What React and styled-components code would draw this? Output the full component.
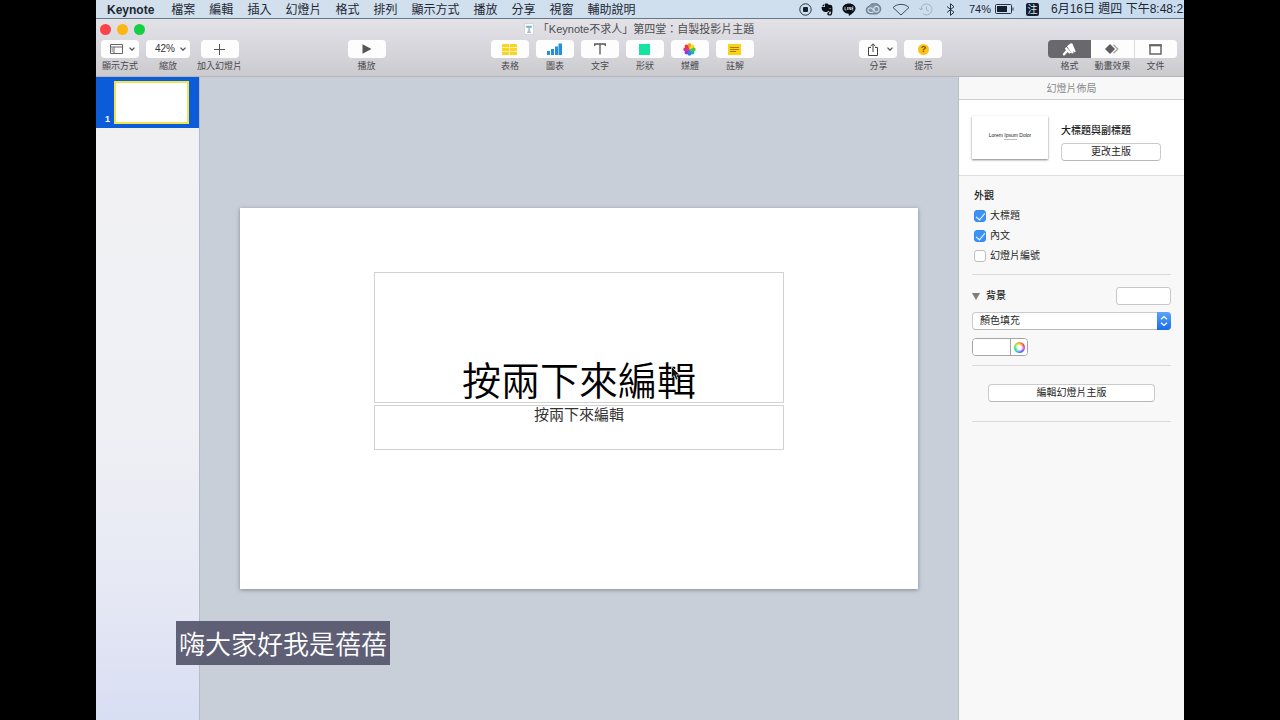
import React from "react";
import styled, { createGlobalStyle } from "styled-components";

const Global = createGlobalStyle`
  * { box-sizing: border-box; }
  body {
    margin: 0;
    background: #000;
    color: #262626;
    font-family: "Liberation Sans", "Noto Sans CJK TC", sans-serif;
    font-size: 10px;
    line-height: 14px;
  }
  button, select, input { font: inherit; color: inherit; margin: 0; padding: 0; }
  svg { display: block; flex: none; }
`;

const Screen = styled.div`
  position: relative;
  width: 85%;
  min-height: 100vh;
  margin: 0 auto;
  display: flex;
  flex-direction: column;
  overflow: hidden;
`;

/* System menu bar */
const MenuBar = styled.header`
  display: flex;
  justify-content: space-between;
  height: 19px;
  padding-left: 11px;
  background: linear-gradient(90deg, #d3e0ec, #cfdfee 60%, #c8dcee);
  border-bottom: 1px solid #64788c;
  color: #1c2733;
  font-size: 12px;
  line-height: 20px;
  white-space: nowrap;
`;
const Menus = styled.nav`
  display: flex;
  gap: 14px;
`;
const Menu = styled.button`
  border: 0;
  background: none;
  line-height: 20px;
  font-weight: ${(p) => (p.$app ? 700 : 400)};
  margin-right: ${(p) => (p.$app ? 3 : 0)}px;
`;
const Status = styled.div`
  display: flex;
  align-items: center;
  gap: 9px;
`;
const Slot = styled.span`
  width: ${(p) => p.$w}px;
  display: flex;
  justify-content: center;
`;
const Battery = styled.span`
  display: flex;
  align-items: center;
  gap: 4px;
  font-size: 11px;
`;
const InputMethod = styled.span`
  width: 13px;
  height: 13px;
  border-radius: 2px;
  background: #14202f;
  color: #dbe8f4;
  font-size: 10px;
  line-height: 13px;
  text-align: center;
`;
const Clock = styled.time`
  width: 133px;
`;

/* Window header */
const WindowHead = styled.div`
  height: 58px;
  background: linear-gradient(#e3e2e7, #dad9df 40%, #cbcbcf);
  border-bottom: 1px solid #b4b4ba;
`;
const TitleRow = styled.div`
  display: grid;
  grid-template-columns: 1fr auto 1fr;
  align-items: center;
  height: 20px;
  padding: 0 6px 0 4px;
`;
const Lights = styled.div`
  display: flex;
  gap: 6px;
`;
const Light = styled.button`
  width: 11px;
  height: 11px;
  border: 0;
  border-radius: 50%;
  background: ${(p) => p.$color};
`;
const Title = styled.h1`
  display: flex;
  align-items: center;
  gap: 4px;
  margin: 0;
  font-size: 11px;
  font-weight: 400;
  color: #4d4d50;
  white-space: nowrap;
`;
const Toolbar = styled.div`
  display: flex;
  justify-content: space-between;
  padding: 1px 7px 0 5px;
`;
const Group = styled.div`
  display: flex;
  gap: ${(p) => p.$gap ?? 7}px;
`;
const Tool = styled.button`
  display: flex;
  flex-direction: column;
  align-items: center;
  gap: 1px;
  border: 0;
  background: none;
  color: #4a4a4c;
  font-size: 9px;
  line-height: 14px;
  white-space: nowrap;
`;
const Face = styled.span`
  display: flex;
  align-items: center;
  justify-content: ${(p) => (p.$menu ? "space-between" : "center")};
  width: ${(p) => p.$w || 38}px;
  height: 18px;
  padding: ${(p) => (p.$menu ? "0 4px 0 9px" : "0")};
  border-radius: 4px;
  background: #fdfdfd;
  color: #333;
  font-size: 10px;
`;
const SegFace = styled(Face)`
  width: 43px;
  border-radius: 0;
  background: ${(p) => (p.$on ? "#69696d" : "#fdfdfd")};
  border-left: ${(p) => (p.$line ? "1px solid #dcdce0" : "0")};
  ${Tool}:first-child & { border-radius: 4px 0 0 4px; }
  ${Tool}:last-child & { border-radius: 0 4px 4px 0; }
`;

/* Work area */
const Body = styled.main`
  flex: 1;
  display: flex;
`;
const Navigator = styled.aside`
  width: 104px;
  border-right: 1px solid #b3bcc8;
  background: linear-gradient(#f1f1f3, #eff0f4 55%, #e6e8f4 80%, #d8def3);
`;
const SlideItem = styled.div`
  display: flex;
  align-items: flex-end;
  justify-content: flex-end;
  gap: 4px;
  height: 51px;
  padding: 0 10px 4px 0;
  background: #0b5cd9;
  color: #fff;
  font-size: 9px;
  line-height: 9px;
  font-weight: 700;
`;
const Thumb = styled.div`
  width: 75px;
  height: 43px;
  border: 2px solid #f4e34a;
  background: #fff;
`;
const Canvas = styled.section`
  flex: 1;
  display: flex;
  align-items: center;
  padding: 0 40px;
  background: #c8cfd8;
`;
const Slide = styled.article`
  position: relative;
  width: 100%;
  aspect-ratio: 16 / 9;
  display: flex;
  flex-direction: column;
  align-items: center;
  gap: 2px;
  padding-top: 64px;
  background: #fff;
  color: #000;
  box-shadow: 0 1px 4px rgba(60, 70, 85, 0.5);
`;
const TextBox = styled.div`
  display: flex;
  justify-content: center;
  width: 410px;
  max-width: 90%;
  border: 1px solid #d2d2d2;
`;
const TitleBox = styled(TextBox)`
  align-items: flex-end;
  height: 131px;
  font-family: "Noto Sans CJK TC", sans-serif;
  font-size: 39px;
  line-height: 48px;
  font-weight: 350;
`;
const BodyBox = styled(TextBox)`
  height: 45px;
  font-size: 15px;
  line-height: 18px;
  font-weight: 400;
  color: #333;
`;
const Pointer = styled.svg`
  position: absolute;
  left: 431px;
  top: 158px;
`;

/* Inspector */
const Inspector = styled.aside`
  width: 226px;
  border-left: 1px solid #b9bfc8;
  background: #f8f8f8;
`;
const InspectorTitle = styled.h2`
  margin: 0;
  height: 23px;
  border-bottom: 1px solid #cfcfcf;
  font-size: 10px;
  line-height: 23px;
  font-weight: 400;
  text-align: center;
  color: #8a8a8a;
`;
const MasterPanel = styled.section`
  display: flex;
  gap: 13px;
  height: 76px;
  padding: 16px 13px 0;
  background: #fff;
  border-bottom: 1px solid #dedede;
`;
const MasterThumb = styled.div`
  width: 76px;
  height: 43px;
  padding-top: 15px;
  background: #fff;
  box-shadow: 0 1px 2px rgba(0, 0, 0, 0.5);
  text-align: center;
  font-size: 5px;
  line-height: 8px;
  color: #222;
`;
const TinyLine = styled.div`
  width: 13px;
  height: 1px;
  margin: 0 auto;
  background: #bbb;
`;
const MasterInfo = styled.div`
  display: flex;
  flex-direction: column;
  gap: 5px;
  padding-top: 8px;
`;
const Strong = styled.h3`
  margin: 0;
  font-size: 10px;
  line-height: 14px;
  font-weight: 500;
  color: #222;
`;
const PushButton = styled.button`
  display: block;
  width: ${(p) => p.$w}px;
  height: 18px;
  margin: 0 auto;
  border: 1px solid #cbcbcb;
  border-bottom-color: #b8b8b8;
  border-radius: 4px;
  background: #fff;
  line-height: 16px;
`;
const Section = styled.section`
  margin: 0 13px;
  padding: ${(p) => p.$pad};
  border-bottom: 1px solid #dcdcdc;
`;
const Checks = styled.div`
  display: flex;
  flex-direction: column;
  gap: 6px;
  padding-left: 2px;
`;
const Check = styled.label`
  display: flex;
  align-items: center;
  gap: 4px;
`;
const Box = styled.input`
  appearance: none;
  position: relative;
  width: 12px;
  height: 12px;
  border: 1px solid #bdbdbd;
  border-radius: 3px;
  background: #fff;
  &:checked {
    border-color: #3288f5;
    background: #3d92f8;
  }
  &:checked::after {
    content: "";
    position: absolute;
    left: 3px;
    top: 0;
    width: 4px;
    height: 8px;
    border: solid #fff;
    border-width: 0 1px 1px 0;
    transform: rotate(40deg);
  }
`;
const FillHead = styled.div`
  display: flex;
  align-items: center;
  gap: 6px;
  height: 18px;
`;
const Preview = styled.button`
  width: 55px;
  height: 18px;
  margin-left: auto;
  border: 1px solid #c8c8c8;
  border-radius: 3px;
  background: #fff;
`;
const SelectWrap = styled.label`
  position: relative;
  display: block;
  margin: 7px 0 8px;
`;
const Select = styled.select`
  display: block;
  appearance: none;
  width: 100%;
  height: 18px;
  padding: 0 20px 0 7px;
  border: 1px solid #cbcbcb;
  border-bottom-color: #b8b8b8;
  border-radius: 4px;
  background: #fff;
  line-height: 16px;
`;
const Stepper = styled.span`
  position: absolute;
  right: 0;
  top: 0;
  display: flex;
  align-items: center;
  justify-content: center;
  width: 14px;
  height: 18px;
  border-radius: 0 4px 4px 0;
  background: linear-gradient(#5ba5f7, #1a6bf0);
  pointer-events: none;
`;
const ColorWell = styled.div`
  display: flex;
  width: 56px;
  height: 18px;
  border: 1px solid #a5a5a5;
  border-radius: 4px;
  background: #fff;
  overflow: hidden;
`;
const Swatch = styled.button`
  flex: 1;
  border: 0;
  background: #fff;
`;
const WheelButton = styled.button`
  display: flex;
  align-items: center;
  justify-content: center;
  width: 17px;
  border: 0;
  border-left: 1px solid #a5a5a5;
  background: #fff;
`;
const Wheel = styled.span`
  width: 11px;
  height: 11px;
  border-radius: 50%;
  background: radial-gradient(#fff 25%, transparent 60%),
    conic-gradient(#f0a020, #f04040, #e040e0, #5060f0, #30c0f0, #30e060, #b0e030, #f0a020);
`;

const Caption = styled.p`
  position: absolute;
  left: 80px;
  bottom: 55px;
  margin: 0;
  padding: 0 3px;
  height: 44px;
  background: rgba(88, 88, 112, 0.95);
  color: #fff;
  font-family: "Noto Sans CJK TC", sans-serif;
  font-size: 26px;
  line-height: 44px;
  font-weight: 350;
  white-space: nowrap;
`;

const Chevron = () => (
  <svg width="6" height="4" viewBox="0 0 6 4" fill="none" stroke="#555" strokeWidth="1.3">
    <path d="M.5.6 3 3.200 5.500.6" />
  </svg>
);

const RecordIcon = () => (
  <svg width="13" height="13" viewBox="0 0 13 13">
    <circle cx="6.5" cy="6.5" r="5.7" fill="none" stroke="#26323e" />
    <rect x="4" y="4" width="5" height="5" rx="1" fill="#17212c" />
  </svg>
);
const ElephantIcon = () => (
  <svg width="12" height="13" viewBox="0 0 12 13" fill="#0b1016">
    <path d="M3.300.8v2.500H.8z" />
    <path d="M4 .5h2.500l.8.900 2.900.500c1 .300 1.300 1.600 1.300 4.100 0 4-.4 6.500-2 6.500H8c-1.200 0-1.700-.7-1.700-1.700 0-1.200.8-1.800 2-1.800v1.300c-.8 0-.8 1 0 1h.9c.6 0 .7-1 .7-2.500-1.500.1-2.400-.3-2.700-1.300C7 8.500 6.300 9 5 9 2 9 .6 7.300.5 4H4z" />
    <path d="M8.300 5.700c.3-.9 1.400-.9 1.600.2z" fill="#cfdfee" />
  </svg>
);
const ChatIcon = () => (
  <svg width="14" height="13" viewBox="0 0 14 13">
    <path d="M7 .5c3.700 0 6.500 2.200 6.500 5 0 2.700-3.500 5.400-6.300 7.200-.6.300-.3-1.300-.6-1.900C3 10.400.5 8.200.5 5.500c0-2.800 2.800-5 6.500-5z" fill="#0b1016" />
    <path d="M3 4v3h1.400M5.600 4v3M7 7V4l1.700 3V4M11.500 4H10v3h1.500M10 5.500h1.300" fill="none" stroke="#cfdfee" strokeWidth=".8" />
  </svg>
);
const CloudIcon = () => (
  <svg width="17" height="12" viewBox="0 0 17 12">
    <path d="M4.800 11A4 4 0 0 1 4 3.200 5.300 5.300 0 0 1 9.500.7a5.200 5.200 0 1 1 2 10.300z" fill="#8497a8" stroke="#5d7080" strokeWidth=".8" />
    <path d="M8.500 8.800C7 10 3 9.800 3 7.200 3 4.600 6 4.300 7.500 6l2.200 2.200c1.500 1.400 4.300.7 4.300-2 0-2.500-2.700-3.700-4.500-2C8.500 5 8.300 6.600 9.800 6.800" fill="none" stroke="#cfdfee" strokeWidth="1.100" />
  </svg>
);
const WifiIcon = () => (
  <svg width="18" height="13" viewBox="0 0 18 13" fill="none" stroke="#3c4c5b">
    <path d="M1 4.500C5.500.3 12.500.3 17 4.500L9 12z" strokeLinejoin="round" />
  </svg>
);
const BackupIcon = () => (
  <svg width="14" height="13" viewBox="0 0 14 13" fill="none" stroke="#a3b3c3">
    <path d="M2 6.500a5.500 5.500 0 1 1 2 4.200M.4 5.300 2 7l1.800-1.700M7.500 3.500v3.300l2.300 1.400" />
  </svg>
);
const BluetoothIcon = () => (
  <svg width="9" height="13" viewBox="0 0 9 13" fill="none" stroke="#25323f">
    <path d="M1 3.500 8 9.300l-3.500 3V.7L8 3.700 1 9.500" />
  </svg>
);
const BatteryIcon = () => (
  <svg width="19" height="10" viewBox="0 0 19 10">
    <rect x=".5" y=".5" width="16" height="9" rx="1" fill="none" stroke="#26323e" />
    <rect x="2" y="2" width="10" height="6" fill="#14202f" />
    <path d="M18 3.500v3" stroke="#26323e" />
  </svg>
);
const DocIcon = () => (
  <svg width="10" height="12" viewBox="0 0 11 13">
    <rect x=".5" y=".5" width="10" height="12" fill="#fafcfd" stroke="#d0d5da" />
    <path d="M2 3h7l-.8 2.500H2.800z" fill="#7fb9cc" />
    <path d="M5.500 5.500v4M3.500 10h4" stroke="#6a8b99" />
  </svg>
);
const LayoutIcon = () => (
  <svg width="13" height="10" viewBox="0 0 13 10" fill="none" stroke="#666">
    <path d="M.5.500h12v9H.5zM.5 3h12M4 3v6.500" />
    <path d="M1.500 5H3M1.500 7H3" />
  </svg>
);
const PlusIcon = () => (
  <svg width="11" height="11" viewBox="0 0 11 11" stroke="#555">
    <path d="M5.500 0v11M0 5.500h11" />
  </svg>
);
const PlayIcon = () => (
  <svg width="10" height="10" viewBox="0 0 10 10"><path d="M.5.300 9.500 5 .5 9.700z" fill="#555" /></svg>
);
const TableIcon = () => (
  <svg width="15" height="11" viewBox="0 0 15 11">
    <rect width="15" height="11" rx="1" fill="#f9d423" />
    <path d="M0 3.500h15M0 7.500h15M7.500 0v11" stroke="#fff8c4" strokeWidth=".8" />
  </svg>
);
const ChartIcon = () => (
  <svg width="15" height="12" viewBox="0 0 15 12" fill="#268fdb">
    <path d="M0 8h3v4H0zM4 6h3v6H4zM8 3.500h3V12H8zM11.500 .500h3.500V12h-3.500z" />
  </svg>
);
const TextIcon = () => (
  <svg width="12" height="12" viewBox="0 0 12 12" fill="none" stroke="#555" strokeWidth="1.300">
    <path d="M.7 3V1h10.600v2M6 1v10.500" />
  </svg>
);
const ShapeIcon = () => (
  <svg width="11" height="11" viewBox="0 0 11 11"><rect width="11" height="11" fill="#15e3a0" /></svg>
);
const petals = ["#f8a51c", "#f4dc1f", "#55c538", "#1fb5a6", "#2b7ee0", "#7944cf", "#dc2ba0", "#f2352c"];
const MediaIcon = () => (
  <svg width="13" height="13" viewBox="0 0 13 13">
    {petals.map((c, i) => (
      <path key={c} d="M6.500 6.500 4.600 2.600C4.200-.4 8.800-.4 8.400 2.600z" fill={c} transform={`rotate(${i * 45} 6.500 6.500)`} />
    ))}
  </svg>
);
const NoteIcon = () => (
  <svg width="13" height="11" viewBox="0 0 13 11">
    <rect width="13" height="11" fill="#fcd116" />
    <path d="M2 3.500h9M2 5.500h9M2 7.500h6" stroke="#836b13" strokeWidth=".8" />
  </svg>
);
const ShareIcon = () => (
  <svg width="10" height="13" viewBox="0 0 10 13" fill="none" stroke="#444">
    <path d="M3 4.500H.5v8h9v-8H7M5 9V1M2.500 3.300 5 .8l2.500 2.500" />
  </svg>
);
const HelpBadge = styled.span`
  width: 11px;
  height: 11px;
  border-radius: 50%;
  background: #fbc318;
  color: #7a4c00;
  font-size: 9px;
  line-height: 11px;
  font-weight: 700;
  text-align: center;
`;
const BrushIcon = () => (
  <svg width="14" height="13" viewBox="0 0 14 13" fill="#fff">
    <path d="M5 3.300 8.300.600c.8-.6 1.800-.4 2.300.4L13.700 8.500l-1.400.9-1-1.600.2 2.300-1.500.6z" />
    <path d="m4.300 4 5 5.600-2 1.100-1.600-1.700-3 3.300C1.700 13 .3 11.700.9 10.700l3-3.500-1-1.700z" />
  </svg>
);
const AnimateIcon = () => (
  <svg width="14" height="10" viewBox="0 0 14 10">
    <path d="M8.500.800 12.700 5 8.500 9.200" fill="#fff" stroke="#aaa" strokeWidth="1.500" />
    <path d="M5 0l5 5-5 5-5-5z" fill="#5d5d60" />
  </svg>
);
const DocumentIcon = () => (
  <svg width="13" height="11" viewBox="0 0 13 11">
    <rect x="1" y="1" width="11" height="9" fill="none" stroke="#666" strokeWidth="1.500" />
    <path d="M.3 1.300h12.400" stroke="#666" strokeWidth="2" />
  </svg>
);

const menus = ["檔案", "編輯", "插入", "幻燈片", "格式", "排列", "顯示方式", "播放", "分享", "視窗", "輔助說明"];

const inserts = [
  ["表格", TableIcon],
  ["圖表", ChartIcon],
  ["文字", TextIcon],
  ["形狀", ShapeIcon],
  ["媒體", MediaIcon],
  ["註解", NoteIcon],
];

const panes = [
  ["格式", BrushIcon],
  ["動畫效果", AnimateIcon],
  ["文件", DocumentIcon],
];

export default function App() {
  return (
    <>
      <Global />
      <Screen>
        <MenuBar>
          <Menus>
            <Menu $app>Keynote</Menu>
            {menus.map((m) => <Menu key={m}>{m}</Menu>)}
          </Menus>
          <Status>
            <Slot $w={13}><RecordIcon /></Slot>
            <Slot $w={12}><ElephantIcon /></Slot>
            <Slot $w={14}><ChatIcon /></Slot>
            <Slot $w={18}><CloudIcon /></Slot>
            <Slot $w={18}><WifiIcon /></Slot>
            <Slot $w={14}><BackupIcon /></Slot>
            <Slot $w={18}><BluetoothIcon /></Slot>
            <Battery>74%<BatteryIcon /></Battery>
            <Slot $w={19}><InputMethod>注</InputMethod></Slot>
            <Clock>6月16日 週四 下午8:48:21</Clock>
          </Status>
        </MenuBar>

        <WindowHead>
          <TitleRow>
            <Lights>
              <Light $color="#fb4249" aria-label="關閉" />
              <Light $color="#fdb712" aria-label="縮到最小" />
              <Light $color="#13cf44" aria-label="放大" />
            </Lights>
            <Title><DocIcon />「Keynote不求人」第四堂：自製投影片主題</Title>
          </TitleRow>
          <Toolbar>
            <Group>
              <Tool><Face $menu><LayoutIcon /><Chevron /></Face>顯示方式</Tool>
              <Tool><Face $menu $w={44}>42%<Chevron /></Face>縮放</Tool>
              <Tool><Face><PlusIcon /></Face>加入幻燈片</Tool>
            </Group>
            <Tool><Face><PlayIcon /></Face>播放</Tool>
            <Group>
              {inserts.map(([name, Icon]) => (
                <Tool key={name}><Face><Icon /></Face>{name}</Tool>
              ))}
            </Group>
            <Group>
              <Tool><Face $menu><ShareIcon /><Chevron /></Face>分享</Tool>
              <Tool><Face><HelpBadge>?</HelpBadge></Face>提示</Tool>
            </Group>
            <Group $gap={0}>
              {panes.map(([name, Icon], i) => (
                <Tool key={name}>
                  <SegFace $on={i === 0} $line={i === 2}><Icon /></SegFace>
                  {name}
                </Tool>
              ))}
            </Group>
          </Toolbar>
        </WindowHead>

        <Body>
          <Navigator>
            <SlideItem>1<Thumb /></SlideItem>
          </Navigator>

          <Canvas>
            <Slide>
              <TitleBox>按兩下來編輯</TitleBox>
              <BodyBox>按兩下來編輯</BodyBox>
              <Pointer width="10" height="15" viewBox="0 0 10 15">
                <path d="M.5.500v11.500l2.600-2.400 1.900 4.400 2-.9-1.900-4.200h3.700z" fill="#111" stroke="#fff" strokeWidth=".6" />
              </Pointer>
            </Slide>
          </Canvas>

          <Inspector>
            <InspectorTitle>幻燈片佈局</InspectorTitle>
            <MasterPanel>
              <MasterThumb>Lorem Ipsum Dolor<TinyLine /></MasterThumb>
              <MasterInfo>
                <Strong>大標題與副標題</Strong>
                <PushButton $w={100}>更改主版</PushButton>
              </MasterInfo>
            </MasterPanel>
            <Section $pad="13px 0 11px">
              <Checks>
                <Strong>外觀</Strong>
                <Check><Box type="checkbox" defaultChecked />大標題</Check>
                <Check><Box type="checkbox" defaultChecked />內文</Check>
                <Check><Box type="checkbox" />幻燈片編號</Check>
              </Checks>
            </Section>
            <Section $pad="12px 0 9px">
              <FillHead>
                <svg width="8" height="7" viewBox="0 0 8 7"><path d="M0 0h8L4 7z" fill="#7c7c7c" /></svg>
                <Strong>背景</Strong>
                <Preview aria-label="背景預覽" />
              </FillHead>
              <SelectWrap>
                <Select aria-label="填充類型"><option>顏色填充</option></Select>
                <Stepper>
                  <svg width="8" height="12" viewBox="0 0 8 12" fill="none" stroke="#fff" strokeWidth="1.300">
                    <path d="M1 4.200 4 1.500l3 2.700M1 7.800l3 2.700 3-2.700" />
                  </svg>
                </Stepper>
              </SelectWrap>
              <ColorWell>
                <Swatch aria-label="顏色" />
                <WheelButton aria-label="色盤"><Wheel /></WheelButton>
              </ColorWell>
            </Section>
            <Section $pad="18px 0 19px">
              <PushButton $w={167}>編輯幻燈片主版</PushButton>
            </Section>
          </Inspector>
        </Body>

        <Caption>嗨大家好我是蓓蓓</Caption>
      </Screen>
    </>
  );
}
